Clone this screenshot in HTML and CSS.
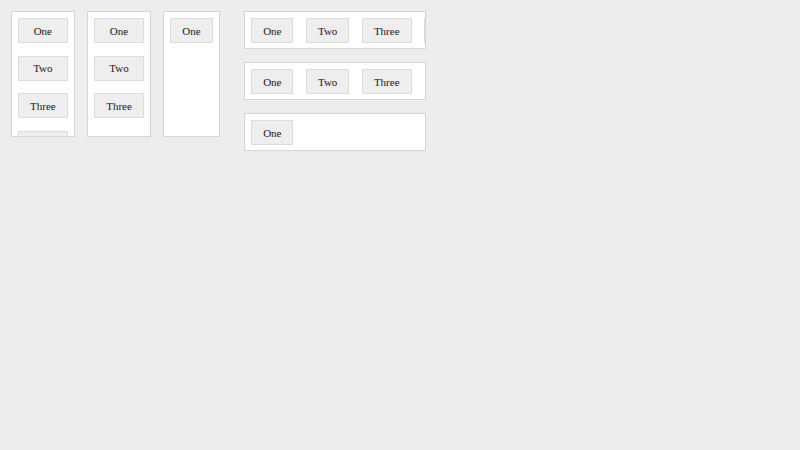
FILE: index.html
```html
<!DOCTYPE html>
<html>
<head>
<meta charset="utf-8">
<link rel="stylesheet" href="styles.css">
</head>
<body>
<div class="page">
  <div class="columns">
    <div class="stack stack-v">
      <button class="btn">One</button>
      <button class="btn">Two</button>
      <button class="btn">Three</button>
      <button class="btn">Four</button>
    </div>
    <div class="stack stack-v">
      <button class="btn">One</button>
      <button class="btn">Two</button>
      <button class="btn">Three</button>
    </div>
    <div class="stack stack-v">
      <button class="btn">One</button>
    </div>
  </div>
  <div class="rows">
    <div class="stack stack-h">
      <button class="btn">One</button>
      <button class="btn">Two</button>
      <button class="btn">Three</button>
      <button class="btn">Four</button>
    </div>
    <div class="stack stack-h">
      <button class="btn">One</button>
      <button class="btn">Two</button>
      <button class="btn">Three</button>
    </div>
    <div class="stack stack-h">
      <button class="btn">One</button>
    </div>
  </div>
</div>
</body>
</html>
```
FILE: styles.css
```css
html, body {
  margin: 0;
  padding: 0;
  background: #ededed;
  width: 800px;
  height: 450px;
  overflow: hidden;
}
.page {
  display: flex;
  align-items: flex-start;
  gap: 24.5px;
  padding: 11px;
}
.columns {
  display: flex;
  align-items: flex-start;
  gap: 12.5px;
}
.rows {
  display: flex;
  flex-direction: column;
  gap: 13px;
}
.stack {
  background: #fff;
  border: 1px solid #d4d4d4;
  padding: 6px;
  overflow: hidden;
  box-sizing: border-box;
}
.stack-v {
  display: flex;
  flex-direction: column;
  gap: 12.5px;
  height: 126px;
}
.stack-h {
  display: flex;
  flex-direction: row;
  gap: 12.5px;
  width: 182px;
  height: 38px;
}
.btn {
  flex: none;
  box-sizing: border-box;
  height: 25px;
  padding: 0 11px;
  margin: 0;
  background: #eeeeee;
  border: 1px solid #dcdcdc;
  border-radius: 0;
  font-family: "Liberation Serif", serif;
  font-size: 11px;
  color: #1a1a1a;
  white-space: nowrap;
}
```
